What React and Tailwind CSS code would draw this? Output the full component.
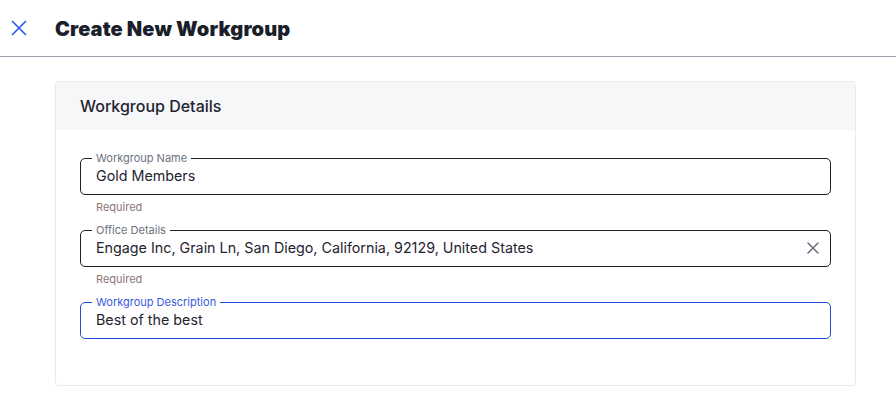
import React from "react";

function Field({ label, value, required, focused, clearable }) {
  return (
    <div className="flex flex-col">
      <fieldset
        className={`rounded-[5px] border px-[11px] pb-[8px] ${
          focused ? "border-[#1d4ed8]" : "border-[#1a1f2b]"
        }`}
      >
        <legend
          className={`px-[4px] text-[11px] leading-[12px] ${
            focused ? "text-[#3b5bdb]" : "text-[#6b7280]"
          }`}
        >
          {label}
        </legend>
        <div className="flex items-center pt-[2px] pl-[4px]">
          <span className="flex-1 text-[14.3px] leading-[20px] text-[#1f2430]">{value}</span>
          {clearable && (
            <svg width="14" height="14" viewBox="0 0 14 14" className="mr-[-1px]">
              <path d="M2 2 L12 12 M12 2 L2 12" stroke="#6b7280" strokeWidth="1.6" strokeLinecap="round" />
            </svg>
          )}
        </div>
      </fieldset>
      {required && (
        <div className="pt-[5px] pl-[16px] text-[11px] leading-[14px] text-[#8a7775]">Required</div>
      )}
    </div>
  );
}

export default function App() {
  return (
    <div className="min-h-[395px] bg-white" style={{ fontFamily: "Inter, 'Noto Sans', sans-serif" }}>
      <header className="flex h-[57px] items-center border-b border-[#9ba1ae]">
        <div className="flex w-[55px] justify-center pr-[18px]">
          <svg width="16" height="16" viewBox="0 0 16 16">
            <path d="M1.5 1.5 L14.5 14.5 M14.5 1.5 L1.5 14.5" stroke="#2e5be6" strokeWidth="1.7" strokeLinecap="round" />
          </svg>
        </div>
        <h1 className="pt-[2px] text-[20px] font-black tracking-[0.1px] text-[#1a1f2b]">Create New Workgroup</h1>
      </header>
      <div className="mt-[24px] ml-[55px] w-[801px] rounded-[4px] border border-[#e8eaee] bg-white">
        <div className="flex h-[48px] items-center bg-[#f6f7f9] px-[24px] text-[16px] font-medium text-[#1f2430]">
          Workgroup Details
        </div>
        <div className="flex flex-col gap-[10px] px-[24px] pt-[22px] pb-[46px]">
          <Field label="Workgroup Name" value="Gold Members" required />
          <Field
            label="Office Details"
            value="Engage Inc, Grain Ln, San Diego, California, 92129, United States"
            required
            clearable
          />
          <Field label="Workgroup Description" value="Best of the best" focused />
        </div>
      </div>
    </div>
  );
}
